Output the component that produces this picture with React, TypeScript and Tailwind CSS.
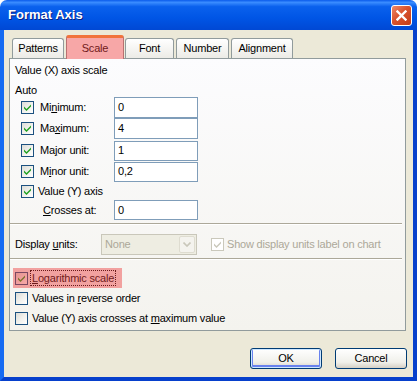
import React from "react";

const font = "font-['Liberation_Sans',Arial,sans-serif]";

function Check({ checked, disabled }: { checked?: boolean; disabled?: boolean }) {
  return (
    <span
      className={`w-[13px] h-[13px] shrink-0 border flex items-center justify-center ${
        disabled
          ? "border-[#CAC8BB] bg-white"
          : "border-[#1C5180] bg-[linear-gradient(135deg,#DCDCD7_0%,#F2F2EE_55%,#FFFFFF_100%)]"
      }`}
    >
      {checked && (
        <svg width="7" height="7" viewBox="0 0 7 7">
          <path d="M0 2.5 L2.5 5 L7 0.5 L7 2.5 L2.5 7 L0 4.5 Z" fill={disabled ? "#CAC8BB" : "#21A121"} />
        </svg>
      )}
    </span>
  );
}

function Field({ value, tall }: { value: string; tall?: boolean }) {
  return (
    <div
      className={`w-[84px] ${tall ? "h-[21px]" : "h-[20px]"} border border-[#7F9DB9] bg-white flex items-center pl-[3px]`}
    >
      {value}
    </div>
  );
}

function Sep() {
  return (
    <div className="ml-0 mr-[3px]">
      <div className="h-px bg-[#ACA899]" />
      <div className="h-px bg-white" />
    </div>
  );
}

export default function App() {
  return (
    <div className={`w-[417px] h-[381px] flex flex-col text-[11px] text-black tracking-[-0.2px] ${font}`}>
      {/* Title bar */}
      <div className="h-[30px] shrink-0 flex items-center justify-between pl-[8px] pr-[5px] rounded-t-[7px] bg-[linear-gradient(to_bottom,#0A5BEB_0%,#3A8CFF_8%,#0A61ED_22%,#0055E5_60%,#0048D4_100%)]">
        <span className="text-white font-bold text-[13px] tracking-normal [text-shadow:1px_1px_#0A2080]">
          Format Axis
        </span>
        <div className="w-[21px] h-[21px] rounded-[3px] border border-white bg-[linear-gradient(135deg,#EE8A6A_0%,#D9532E_45%,#C23C18_100%)] flex items-center justify-center">
          <svg width="11" height="11" viewBox="0 0 11 11">
            <path d="M1.5 1.5 L9.5 9.5 M9.5 1.5 L1.5 9.5" stroke="white" strokeWidth="2.4" strokeLinecap="square" />
          </svg>
        </div>
      </div>

      {/* Body */}
      <div className="flex-1 flex flex-col border-l-[4px] border-r-[4px] border-b-[4px] border-l-[#166BF2] border-r-[#0740CC] border-b-[#0740CC] bg-[#ECE9D8] pt-[5px]">
        {/* Tabs */}
        <div className="h-[23px] flex items-end pl-[8px]">
          <div className="w-[52px] h-[20px] border border-b-0 border-[#919B9C] rounded-t-[3px] bg-[linear-gradient(to_bottom,#FFFFFF,#ECEBE6)] flex items-center justify-center">
            Patterns
          </div>
          <div className="relative z-10 ml-[2px] -mb-px w-[58px] h-[24px] border-x border-[#919B9C] border-t-[3px] border-t-[#F5A03C] rounded-t-[3px] bg-white flex items-center justify-center pb-[1px]">
            Scale
            <div className="absolute inset-x-[-1px] top-[-3px] bottom-0 bg-[#EE3B3B]/45 rounded-t-[3px]" />
          </div>
          <div className="ml-[1px] w-[49px] h-[20px] border border-b-0 border-[#919B9C] rounded-t-[3px] bg-[linear-gradient(to_bottom,#FFFFFF,#ECEBE6)] flex items-center justify-center">
            Font
          </div>
          <div className="ml-[2px] w-[53px] h-[20px] border border-b-0 border-[#919B9C] rounded-t-[3px] bg-[linear-gradient(to_bottom,#FFFFFF,#ECEBE6)] flex items-center justify-center">
            Number
          </div>
          <div className="ml-[2px] w-[62px] h-[20px] border border-b-0 border-[#919B9C] rounded-t-[3px] bg-[linear-gradient(to_bottom,#FFFFFF,#ECEBE6)] flex items-center justify-center">
            Alignment
          </div>
        </div>

        {/* Panel */}
        <div className="ml-[5px] w-[397px] h-[273px] border border-[#919B9C] bg-[linear-gradient(to_bottom,#FCFCFE,#F4F3EE)] flex flex-col">
          <div className="mt-[4px] h-[14px] leading-[14px] pl-[5px]">Value (X) axis scale</div>
          <div className="mt-[7px] h-[13px] leading-[13px] pl-[5px]">Auto</div>

          <div className="flex items-center h-[21px] pl-[11px]">
            <Check checked />
            <span className="ml-[6px] w-[74px]">
              Mi<u>n</u>imum:
            </span>
            <Field value="0" tall />
          </div>
          <div className="flex items-center h-[21px] pl-[11px]">
            <Check checked />
            <span className="ml-[6px] w-[74px]">
              Ma<u>x</u>imum:
            </span>
            <Field value="4" tall />
          </div>
          <div className="flex items-center h-[21px] mt-[1px] pl-[11px]">
            <Check checked />
            <span className="ml-[6px] w-[74px]">
              Ma<u>j</u>or unit:
            </span>
            <Field value="1" />
          </div>
          <div className="flex items-center h-[21px] pl-[11px]">
            <Check checked />
            <span className="ml-[6px] w-[74px]">
              M<u>i</u>nor unit:
            </span>
            <Field value="0,2" />
          </div>

          <div className="flex items-center h-[18px] pl-[11px]">
            <Check checked />
            <span className="ml-[4px]">Value (Y) axis</span>
          </div>
          <div className="flex items-center h-[20px] pl-[33px]">
            <span className="w-[71px]">
              <u>C</u>rosses at:
            </span>
            <Field value="0" />
          </div>

          <div className="mt-[3px]">
            <Sep />
          </div>

          <div className="mt-[9px] flex items-center h-[21px] pl-[5px]">
            <span className="w-[86px]">
              Display <u>u</u>nits:
            </span>
            <div className="w-[96px] h-[21px] border border-[#C9C7BA] bg-[#EEEDE2] flex items-center justify-between">
              <span className="pl-[3px] text-[#ACA899]">None</span>
              <span className="w-[16px] h-[17px] mr-[1px] bg-[#F4F3EE] border border-[#DEDCD0] rounded-[2px] flex items-center justify-center">
                <svg width="8" height="5" viewBox="0 0 8 5">
                  <path d="M0.5 0.5 L4 4 L7.5 0.5" stroke="#C9C7BA" strokeWidth="1.6" fill="none" />
                </svg>
              </span>
            </div>
            <span className="ml-[14px]">
              <Check checked disabled />
            </span>
            <span className="ml-[3px] text-[#ACA899]">Show display units label on chart</span>
          </div>

          <div className="mt-[3px]">
            <Sep />
          </div>

          <div className="mt-[8px] flex items-center h-[20px] pl-[3px]">
            <div className="relative flex items-center h-[20px] pl-[2px] pr-[6px]">
              <Check checked />
              <span className="ml-[2px] border border-dotted border-black px-[1px] leading-[14px]">
                <u>L</u>ogarithmic scale
              </span>
              <div className="absolute inset-0 bg-[#EE3B3B]/45" />
            </div>
          </div>
          <div className="flex items-center h-[20px] pl-[5px]">
            <Check />
            <span className="ml-[4px]">
              Values in <u>r</u>everse order
            </span>
          </div>
          <div className="flex items-center h-[20px] pl-[5px]">
            <Check />
            <span className="ml-[4px]">
              Value (Y) axis crosses at <u>m</u>aximum value
            </span>
          </div>
        </div>

        {/* Buttons */}
        <div className="mt-[17px] flex justify-end pr-[6px] gap-[13px]">
          <button className="w-[72px] h-[21px] rounded-[3px] border border-[#003C74] bg-[linear-gradient(to_bottom,#FFFFFF,#F0F0EA_70%,#D6D0C5)] shadow-[inset_0_0_0_1px_#CEE7FF,inset_0_-1px_0_2px_#6982EE] flex items-center justify-center">
            OK
          </button>
          <button className="w-[72px] h-[21px] rounded-[3px] border border-[#003C74] bg-[linear-gradient(to_bottom,#FFFFFF,#F0F0EA_70%,#D6D0C5)] flex items-center justify-center">
            Cancel
          </button>
        </div>
      </div>
    </div>
  );
}
